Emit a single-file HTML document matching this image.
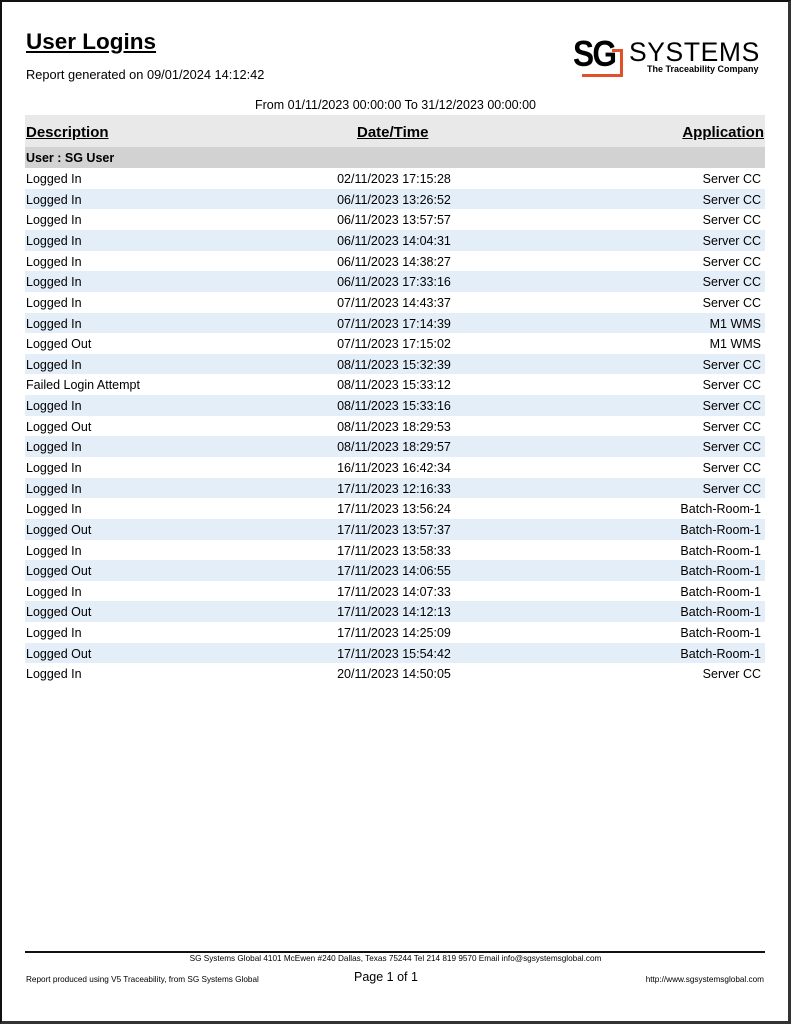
<!DOCTYPE html>
<html><head><meta charset="utf-8"><style>
*{margin:0;padding:0;box-sizing:border-box}
body{width:791px;height:1024px;position:relative;background:#fff;font-family:"Liberation Sans",Arial,sans-serif;color:#000;overflow:hidden}
.frame{position:absolute;left:0;top:0;width:791px;height:1024px;border:2px solid #111;border-right:3px solid #333;border-bottom:3px solid #333}
.a{position:absolute}
.row{position:absolute;left:25px;width:740px;height:20.64px;font-size:12.5px;line-height:22px}
.row .d{position:absolute;left:1px}
.row .t{position:absolute;left:309px;width:120px;text-align:center}
.row .p{position:absolute;right:4px}
.alt{background:#e4eef9}
</style></head><body>
<div class="frame"></div>
<div class="a" style="left:26px;top:29px;font-size:22.5px;font-weight:bold;text-decoration:underline">User Logins</div>
<div class="a" style="left:26px;top:67px;font-size:12.8px">Report generated on 09/01/2024 14:12:42</div>
<!-- logo -->
<div class="a" style="left:573px;top:36px;font-size:36px;font-weight:bold;letter-spacing:-2px;line-height:36px;transform:scaleX(0.88);transform-origin:left">SG</div>
<div class="a" style="left:582px;top:49px;width:41px;height:28px;border-right:3px solid #e2502a;border-bottom:3px solid #e2502a"></div>
<div class="a" style="left:612px;top:49px;width:10px;height:3px;background:#e2502a"></div>
<div class="a" style="left:629px;top:38px;font-size:26.5px;line-height:28px;letter-spacing:0.6px">SYSTEMS</div>
<div class="a" style="left:647px;top:64px;font-size:9px;font-weight:bold;line-height:11px">The Traceability Company</div>
<div class="a" style="left:0;width:791px;top:98px;text-align:center;font-size:12.5px">From 01/11/2023 00:00:00 To 31/12/2023 00:00:00</div>
<div class="a" style="left:25px;top:115px;width:740px;height:32px;background:#e9e9e9;font-size:15px;font-weight:bold;line-height:36px">
<span class="a" style="left:1px;text-decoration:underline">Description</span>
<span class="a" style="left:332px;text-decoration:underline">Date/Time</span>
<span class="a" style="right:1px;text-decoration:underline">Application</span>
</div>
<div class="a" style="left:25px;top:147px;width:740px;height:21px;background:#d2d2d2;font-size:12.5px;font-weight:bold;line-height:22px;padding-left:1px">User : SG User</div>
<div class="row" style="top:168.0px"><span class="d">Logged In</span><span class="t">02/11/2023 17:15:28</span><span class="p">Server CC</span></div>
<div class="row alt" style="top:188.6px"><span class="d">Logged In</span><span class="t">06/11/2023 13:26:52</span><span class="p">Server CC</span></div>
<div class="row" style="top:209.3px"><span class="d">Logged In</span><span class="t">06/11/2023 13:57:57</span><span class="p">Server CC</span></div>
<div class="row alt" style="top:229.9px"><span class="d">Logged In</span><span class="t">06/11/2023 14:04:31</span><span class="p">Server CC</span></div>
<div class="row" style="top:250.6px"><span class="d">Logged In</span><span class="t">06/11/2023 14:38:27</span><span class="p">Server CC</span></div>
<div class="row alt" style="top:271.2px"><span class="d">Logged In</span><span class="t">06/11/2023 17:33:16</span><span class="p">Server CC</span></div>
<div class="row" style="top:291.8px"><span class="d">Logged In</span><span class="t">07/11/2023 14:43:37</span><span class="p">Server CC</span></div>
<div class="row alt" style="top:312.5px"><span class="d">Logged In</span><span class="t">07/11/2023 17:14:39</span><span class="p">M1 WMS</span></div>
<div class="row" style="top:333.1px"><span class="d">Logged Out</span><span class="t">07/11/2023 17:15:02</span><span class="p">M1 WMS</span></div>
<div class="row alt" style="top:353.8px"><span class="d">Logged In</span><span class="t">08/11/2023 15:32:39</span><span class="p">Server CC</span></div>
<div class="row" style="top:374.4px"><span class="d">Failed Login Attempt</span><span class="t">08/11/2023 15:33:12</span><span class="p">Server CC</span></div>
<div class="row alt" style="top:395.0px"><span class="d">Logged In</span><span class="t">08/11/2023 15:33:16</span><span class="p">Server CC</span></div>
<div class="row" style="top:415.7px"><span class="d">Logged Out</span><span class="t">08/11/2023 18:29:53</span><span class="p">Server CC</span></div>
<div class="row alt" style="top:436.3px"><span class="d">Logged In</span><span class="t">08/11/2023 18:29:57</span><span class="p">Server CC</span></div>
<div class="row" style="top:457.0px"><span class="d">Logged In</span><span class="t">16/11/2023 16:42:34</span><span class="p">Server CC</span></div>
<div class="row alt" style="top:477.6px"><span class="d">Logged In</span><span class="t">17/11/2023 12:16:33</span><span class="p">Server CC</span></div>
<div class="row" style="top:498.2px"><span class="d">Logged In</span><span class="t">17/11/2023 13:56:24</span><span class="p">Batch-Room-1</span></div>
<div class="row alt" style="top:518.9px"><span class="d">Logged Out</span><span class="t">17/11/2023 13:57:37</span><span class="p">Batch-Room-1</span></div>
<div class="row" style="top:539.5px"><span class="d">Logged In</span><span class="t">17/11/2023 13:58:33</span><span class="p">Batch-Room-1</span></div>
<div class="row alt" style="top:560.2px"><span class="d">Logged Out</span><span class="t">17/11/2023 14:06:55</span><span class="p">Batch-Room-1</span></div>
<div class="row" style="top:580.8px"><span class="d">Logged In</span><span class="t">17/11/2023 14:07:33</span><span class="p">Batch-Room-1</span></div>
<div class="row alt" style="top:601.4px"><span class="d">Logged Out</span><span class="t">17/11/2023 14:12:13</span><span class="p">Batch-Room-1</span></div>
<div class="row" style="top:622.1px"><span class="d">Logged In</span><span class="t">17/11/2023 14:25:09</span><span class="p">Batch-Room-1</span></div>
<div class="row alt" style="top:642.7px"><span class="d">Logged Out</span><span class="t">17/11/2023 15:54:42</span><span class="p">Batch-Room-1</span></div>
<div class="row" style="top:663.4px"><span class="d">Logged In</span><span class="t">20/11/2023 14:50:05</span><span class="p">Server CC</span></div>
<div class="a" style="left:25px;top:951px;width:740px;height:2px;background:#111"></div>
<div class="a" style="left:0;width:791px;top:954px;text-align:center;font-size:8.2px">SG Systems Global 4101 McEwen #240 Dallas, Texas 75244 Tel 214 819 9570 Email info@sgsystemsglobal.com</div>
<div class="a" style="left:26px;top:975px;font-size:8.2px">Report produced using V5 Traceability, from SG Systems Global</div>
<div class="a" style="left:354px;top:970px;font-size:12.5px">Page 1 of 1</div>
<div class="a" style="right:27px;top:975px;font-size:8.2px">http://www.sgsystemsglobal.com</div>
</body></html>
